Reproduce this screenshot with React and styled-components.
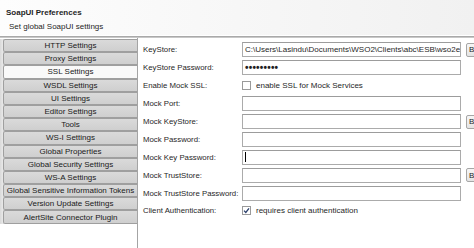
import styled, { createGlobalStyle } from 'styled-components'

const GlobalStyle = createGlobalStyle`
  html, body {
    margin: 0;
    padding: 0;
    background: #ffffff;
  }
  body {
    font-family: "Liberation Sans", Arial, sans-serif;
    font-size: 8px;
    color: #1f1f1f;
  }
`

const Window = styled.div`
  width: 474px;
  height: 248px;
  overflow: hidden;
  display: flex;
  flex-direction: column;
  background: #ffffff;
`

const Header = styled.div`
  height: 36px;
  box-sizing: border-box;
  padding: 8px 0 0 6px;
  background: linear-gradient(to right, #fdfdfd, #f1f1f1);
  border-bottom: 1px solid #ffffff;
  box-shadow: 0 1px 0 #a9a9a9, 0 2px 0 #c8c8c8;
  margin-bottom: 2px;
`

const Title = styled.div`
  font-weight: bold;
  font-size: 8px;
  line-height: 10px;
`

const Subtitle = styled.div`
  margin: 4px 0 0 3px;
  font-size: 8px;
  line-height: 10px;
`

const Body = styled.div`
  flex: 1;
  display: flex;
  min-height: 0;
`

const Sidebar = styled.div`
  width: 138px;
  flex: none;
  box-sizing: border-box;
  border-right: 1px solid #a4a4a4;
  padding-top: 1px;
`

const TabList = styled.div`
  display: flex;
  flex-direction: column;
  padding-left: 3px;
  background: linear-gradient(to right, #d9d9d9 0, #e9e9e9 3px, transparent 3px);
`

const Tab = styled.div`
  height: 13.2px;
  box-sizing: border-box;
  border: 1px solid #9f9f9f;
  border-right: none;
  border-radius: 2px 0 0 2px;
  background: ${({ selected }) =>
    selected ? '#f9f9f9' : 'linear-gradient(#dadada, #cfcfcf)'};
  display: flex;
  align-items: center;
  justify-content: center;
  font-size: 8px;
  white-space: nowrap;
  color: #1a1a1a;
`

const Content = styled.div`
  flex: 1;
  padding: 3px 0 0 5px;
`

const Form = styled.div`
  display: grid;
  grid-template-columns: 94px 219px 34px;
  grid-auto-rows: 17.9px;
  column-gap: 5px;
  align-items: center;
  width: 362px;
`

const Label = styled.div`
  white-space: nowrap;
  font-size: 7.8px;
`

const Field = styled.div`
  height: 15px;
  box-sizing: border-box;
  border: 1px solid #ababab;
  border-top-color: #9c9c9c;
  background: #ffffff;
  display: flex;
  align-items: center;
  padding-left: 2px;
  overflow: hidden;
  white-space: nowrap;
  font-size: ${({ secret }) => (secret ? '10px' : '8px')};
  font-weight: ${({ secret }) => (secret ? 'bold' : 'normal')};
  letter-spacing: ${({ secret }) => (secret ? '0.2px' : '0')};
`

const Caret = styled.span`
  display: inline-block;
  width: 1px;
  height: 10px;
  background: #000000;
`

const Button = styled.div`
  height: 14px;
  box-sizing: border-box;
  border: 1px solid #a6a6a6;
  border-radius: 2px;
  background: linear-gradient(#f6f6f6, #e4e4e4);
  padding-left: 2px;
  display: flex;
  align-items: center;
  overflow: hidden;
  white-space: nowrap;
`

const Check = styled.div`
  grid-column: 2 / 4;
  display: flex;
  align-items: center;
  gap: 5px;
  white-space: nowrap;
`

const Box = styled.span`
  width: 9px;
  height: 9px;
  box-sizing: border-box;
  border: 1px solid #9a9a9a;
  background: #ffffff;
  display: inline-flex;
  align-items: center;
  justify-content: center;
`

const TABS = [
  'HTTP Settings',
  'Proxy Settings',
  'SSL Settings',
  'WSDL Settings',
  'UI Settings',
  'Editor Settings',
  'Tools',
  'WS-I Settings',
  'Global Properties',
  'Global Security Settings',
  'WS-A Settings',
  'Global Sensitive Information Tokens',
  'Version Update Settings',
  'AlertSite Connector Plugin',
]

const ROWS = [
  {
    label: 'KeyStore:',
    type: 'field',
    value: 'C:\\Users\\Lasindu\\Documents\\WSO2\\Clients\\abc\\ESB\\wso2esb',
    browse: true,
  },
  { label: 'KeyStore Password:', type: 'field', value: '•••••••••', secret: true },
  { label: 'Enable Mock SSL:', type: 'check', value: 'enable SSL for Mock Services' },
  { label: 'Mock Port:', type: 'field' },
  { label: 'Mock KeyStore:', type: 'field', browse: true },
  { label: 'Mock Password:', type: 'field' },
  { label: 'Mock Key Password:', type: 'field', caret: true },
  { label: 'Mock TrustStore:', type: 'field', browse: true },
  { label: 'Mock TrustStore Password:', type: 'field' },
  {
    label: 'Client Authentication:',
    type: 'check',
    value: 'requires client authentication',
    checked: true,
  },
]

const Tick = () => (
  <svg width="7" height="7" viewBox="0 0 7 7">
    <path d="M1 3.6 L2.8 5.4 L6 1.3" fill="none" stroke="#2b3f6b" strokeWidth="1.3" />
  </svg>
)

const App = () => {
  return (
    <Window>
      <GlobalStyle />
      <Header>
        <Title>SoapUI Preferences</Title>
        <Subtitle>Set global SoapUI settings</Subtitle>
      </Header>
      <Body>
        <Sidebar>
          <TabList>
            {TABS.map((tab) => (
              <Tab key={tab} selected={tab === 'SSL Settings'}>
                {tab}
              </Tab>
            ))}
          </TabList>
        </Sidebar>
        <Content>
          <Form>
            {ROWS.map((row) => [
              <Label key={row.label + '-l'}>{row.label}</Label>,
              row.type === 'check' ? (
                <Check key={row.label + '-c'}>
                  <Box>{row.checked ? <Tick /> : null}</Box>
                  {row.value}
                </Check>
              ) : (
                <Field key={row.label + '-f'} secret={row.secret}>
                  {row.caret ? <Caret /> : row.value}
                </Field>
              ),
              row.browse ? <Button key={row.label + '-b'}>Browse</Button> : null,
              row.type === 'field' && !row.browse ? <span key={row.label + '-e'} /> : null,
            ])}
          </Form>
        </Content>
      </Body>
    </Window>
  )
}

export default App
